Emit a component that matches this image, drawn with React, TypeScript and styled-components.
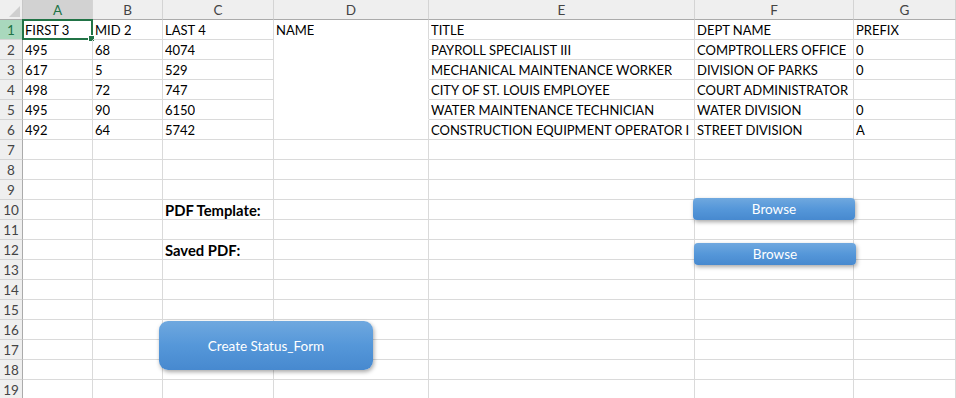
import React from "react";
import styled, { createGlobalStyle } from "styled-components";

const GlobalStyle = createGlobalStyle`
  html, body { margin: 0; padding: 0; background: #ffffff; }
  body { width: 956px; height: 398px; overflow: hidden; font-family: Lato, "Open Sans", "Liberation Sans", sans-serif; }
`;

const COLS = [23, 70, 70, 111, 155, 266, 159, 102];
const LETTERS = ["A", "B", "C", "D", "E", "F", "G"];

const Sheet = styled.div`
  position: relative;
  width: 956px;
  height: 398px;
  overflow: hidden;
  display: grid;
  grid-template-columns: ${COLS.map((c) => `${c}px`).join(" ")};
  grid-auto-rows: 20px;
`;

const Corner = styled.div`
  background: #efefef;
  border-right: 1px solid #c8c8c8;
  border-bottom: 1px solid #ababab;
  box-sizing: border-box;
  display: flex;
  align-items: flex-end;
  justify-content: flex-end;
  padding: 0 2px 2px 0;
`;

const ColHead = styled.div<{ $sel?: boolean }>`
  box-sizing: border-box;
  background: ${(p) => (p.$sel ? "#d2d2d2" : "#efefef")};
  color: ${(p) => (p.$sel ? "#217346" : "#444444")};
  border-right: 1px solid #d4d4d4;
  border-bottom: 1px solid #ababab;
  display: flex;
  align-items: center;
  justify-content: center;
  font-size: 13.5px;
  padding-top: 1px;
`;

const RowHead = styled.div<{ $sel?: boolean }>`
  box-sizing: border-box;
  background: ${(p) => (p.$sel ? "#a9d8bd" : "#efefef")};
  color: ${(p) => (p.$sel ? "#217346" : "#444444")};
  border-right: 1px solid #ababab;
  border-bottom: 1px solid #d4d4d4;
  display: flex;
  align-items: center;
  justify-content: center;
  font-size: 13.5px;
  padding-top: 1px;
`;

const Cell = styled.div<{ $bold?: boolean; $noBottom?: boolean }>`
  position: relative;
  box-sizing: border-box;
  border-right: 1px solid #dadada;
  border-bottom: 1px solid ${(p) => (p.$noBottom ? "transparent" : "#dadada")};
  display: flex;
  align-items: center;
  padding: 1px 0 0 2px;
  font-size: ${(p) => (p.$bold ? "14.8px" : "13px")};
  font-weight: ${(p) => (p.$bold ? 700 : 400)};
  color: #000000;
  white-space: nowrap;
`;

const CellText = styled.span`
  overflow: hidden;
`;

const Selection = styled.div`
  position: absolute;
  left: -1px;
  top: -1px;
  right: -1px;
  bottom: -1px;
  border: 2px solid #217346;
  pointer-events: none;
`;

const Handle = styled.div`
  position: absolute;
  right: -4px;
  bottom: -4px;
  width: 5px;
  height: 5px;
  background: #217346;
  border: 1px solid #ffffff;
`;

const ShapeButton = styled.div<{ $x: number; $y: number; $w: number; $h: number; $r: number }>`
  position: absolute;
  left: ${(p) => p.$x}px;
  top: ${(p) => p.$y}px;
  width: ${(p) => p.$w}px;
  height: ${(p) => p.$h}px;
  border-radius: ${(p) => p.$r}px;
  background: linear-gradient(to bottom, #6fa8df 0%, #5597d9 50%, #4789cf 100%);
  box-shadow: 1px 2px 4px rgba(0, 0, 0, 0.35);
  color: #ffffff;
  display: flex;
  align-items: center;
  justify-content: center;
  font-size: 13.5px;
  box-sizing: border-box;
`;

const rows: string[][] = [
  ["FIRST 3", "MID 2", "LAST 4", "NAME", "TITLE", "DEPT NAME", "PREFIX"],
  ["495", "68", "4074", "", "PAYROLL SPECIALIST III", "COMPTROLLERS OFFICE", "0"],
  ["617", "5", "529", "", "MECHANICAL MAINTENANCE WORKER", "DIVISION OF PARKS", "0"],
  ["498", "72", "747", "", "CITY OF ST. LOUIS EMPLOYEE", "COURT ADMINISTRATOR", ""],
  ["495", "90", "6150", "", "WATER MAINTENANCE TECHNICIAN", "WATER DIVISION", "0"],
  ["492", "64", "5742", "", "CONSTRUCTION EQUIPMENT OPERATOR I", "STREET DIVISION", "A"],
];

const labels: Record<number, string> = { 10: "PDF Template:", 12: "Saved PDF:" };

export default function App() {
  const allRows: string[][] = [];
  for (let r = 1; r <= 19; r++) {
    if (r <= rows.length) allRows.push(rows[r - 1]);
    else {
      const blank = ["", "", "", "", "", "", ""];
      if (labels[r]) blank[2] = labels[r];
      allRows.push(blank);
    }
  }
  return (
    <>
      <GlobalStyle />
      <Sheet>
        <Corner>
          <svg width="11" height="11" viewBox="0 0 11 11">
            <polygon points="11,0 11,11 0,11" fill="#cfcfcf" />
          </svg>
        </Corner>
        {LETTERS.map((l, i) => (
          <ColHead key={l} $sel={i === 0}>
            {l}
          </ColHead>
        ))}
        {allRows.map((row, ri) => {
          const r = ri + 1;
          return (
            <React.Fragment key={r}>
              <RowHead $sel={r === 1}>{r}</RowHead>
              {row.map((v, ci) => (
                <Cell
                  key={ci}
                  $bold={!!labels[r] && ci === 2}
                  $noBottom={ci === 3 && r <= 5}
                >
                  <CellText>{v}</CellText>
                  {r === 1 && ci === 0 && (
                    <Selection>
                      <Handle />
                    </Selection>
                  )}
                </Cell>
              ))}
            </React.Fragment>
          );
        })}
        <ShapeButton $x={693} $y={198} $w={162} $h={22} $r={4}>
          Browse
        </ShapeButton>
        <ShapeButton $x={694} $y={243} $w={162} $h={22} $r={4}>
          Browse
        </ShapeButton>
        <ShapeButton $x={159} $y={321} $w={214} $h={49} $r={9}>
          Create Status_Form
        </ShapeButton>
      </Sheet>
    </>
  );
}
